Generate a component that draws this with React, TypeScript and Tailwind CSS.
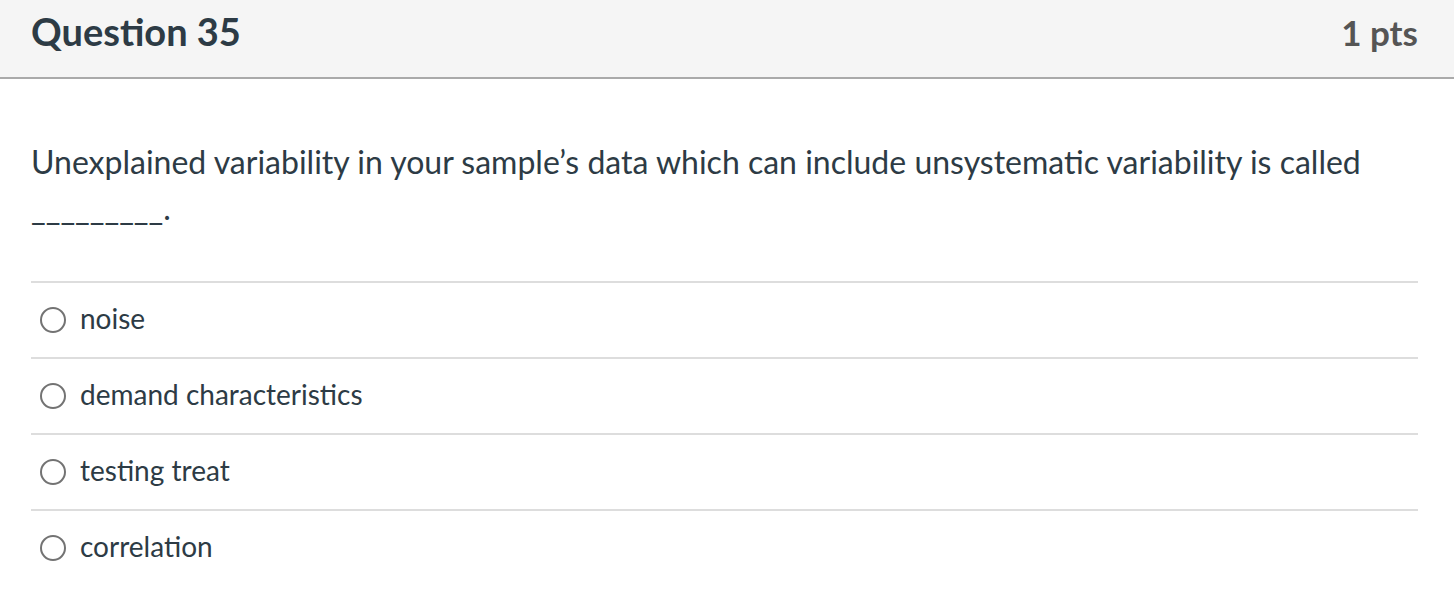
import React from "react";

const options = ["noise", "demand characteristics", "testing treat", "correlation"];

export default function App() {
  return (
    <div className="w-[1454px] h-[616px] bg-white overflow-hidden" style={{ fontFamily: "Lato, 'Liberation Sans', sans-serif" }}>
      <div className="h-[79px] bg-[#f5f5f5] border-b-2 border-[#aaaaaa] flex items-baseline justify-between pl-[31px] pr-[36px] pt-[12px]">
        <div className="text-[38px] leading-[38px] font-bold text-[#2d3b45]">Question 35</div>
        <div className="text-[35px] leading-[38px] font-bold text-[#555555]">1 pts</div>
      </div>
      <div className="pl-[31px] pr-[36px]">
        <div className="pt-[60px] pb-[50px] text-[32px] leading-[46px] text-[#2d3b45]">
          Unexplained variability in your sample’s data which can include unsystematic variability is called _________.
        </div>
        <div>
          {options.map((o) => (
            <div key={o} className="h-[76px] border-t-2 border-[#dddddd] flex items-center pl-[9px] gap-[14px]">
              <div className="w-[26px] h-[26px] rounded-full border-2 border-[#737373] bg-white" />
              <span className="text-[28px] text-[#2d3b45] mb-[4px]">{o}</span>
            </div>
          ))}
        </div>
      </div>
    </div>
  );
}
